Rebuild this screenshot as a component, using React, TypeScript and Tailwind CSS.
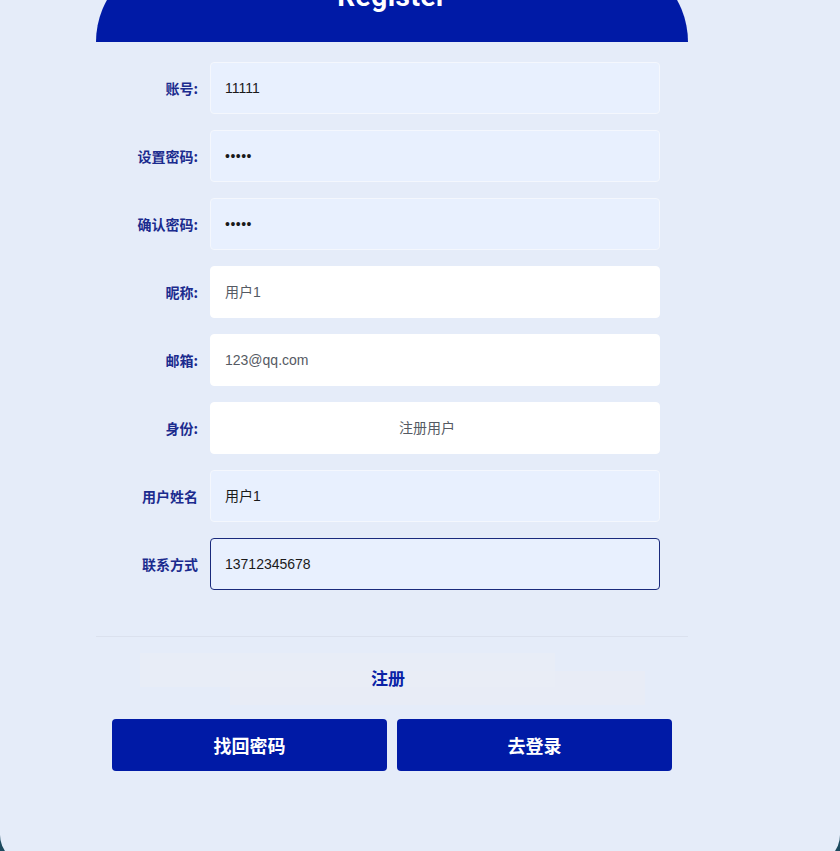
import React from "react";

const rows: { label: string; value: string; kind: "auto" | "white" | "focus"; center?: boolean; pwd?: boolean; gray?: boolean }[] = [
  { label: "账号:", value: "11111", kind: "auto" },
  { label: "设置密码:", value: "•••••", kind: "auto", pwd: true },
  { label: "确认密码:", value: "•••••", kind: "auto", pwd: true },
  { label: "昵称:", value: "用户1", kind: "white", gray: true },
  { label: "邮箱:", value: "123@qq.com", kind: "white", gray: true },
  { label: "身份:", value: "注册用户", kind: "white", gray: true, center: true },
  { label: "用户姓名", value: "用户1", kind: "auto" },
  { label: "联系方式", value: "13712345678", kind: "focus" },
];

export default function App() {
  return (
    <div className="min-h-screen w-full bg-[#1d4a5e] overflow-hidden" style={{ fontFamily: '"Liberation Sans", "Noto Sans CJK SC", sans-serif' }}>
      <div className="w-full h-[863px] rounded-b-[28px] bg-[#e5ecf9] overflow-hidden">
        <div className="ml-[96px] w-[592px] flex flex-col">
          <div className="-mt-[44px] h-[86px] rounded-t-[86px] bg-[#001aa6] flex justify-center">
            <div className="mt-[25px] text-white font-bold text-[28px] leading-[32px] tracking-[0.5px]" style={{ fontFamily: 'Roboto, "Liberation Sans", sans-serif' }}>
              Register
            </div>
          </div>
          <div className="mt-[20px] flex flex-col gap-[16px]">
            {rows.map((r) => (
              <div key={r.label} className="flex items-center h-[52px]">
                <div
                  className="w-[102px] text-right text-[14px] font-bold text-[#1b2b8e]"
                  style={{ fontFamily: '"Noto Sans CJK SC", sans-serif' }}
                >
                  {r.label}
                </div>
                <div
                  className={
                    "ml-[12px] w-[450px] h-[52px] rounded-[4px] flex items-center text-[14px] " +
                    (r.kind === "auto"
                      ? "bg-[#e8f0fe] border border-[#f4f7fd]"
                      : r.kind === "white"
                      ? "bg-white border border-white"
                      : "bg-[#e8f0fe] border border-[#1a2a7c]") +
                    (r.center ? " justify-center pl-[14px] pr-[30px]" : " px-[14px]") +
                    (r.gray ? " text-[#555a63]" : " text-[#1a1a1a]")
                  }
                >
                  <span className={r.pwd ? "text-[14px] tracking-[0.5px]" : ""}>{r.value}</span>
                </div>
              </div>
            ))}
          </div>
          <div className="mt-[46px] h-px bg-[#dbe1ee]" />
          <div className="relative mt-[16px] h-[52px] flex items-center justify-center">
            <div className="absolute left-[44px] top-0 w-[415px] h-[34px] bg-[#e9edf6] opacity-80" />
            <div className="absolute left-[134px] top-[18px] w-[415px] h-[34px] bg-[#e9edf5] opacity-70" />
            <span
              className="relative text-[17px] font-bold text-[#0a22a6] -mt-[2px] -ml-[8px]"
              style={{ fontFamily: '"Noto Sans CJK SC", sans-serif' }}
            >
              注册
            </span>
          </div>
          <div className="mt-[14px] flex gap-[10px] px-[16px]">
            <button
              className="flex-1 h-[52px] rounded-[4px] bg-[#001aa6] text-white text-[18px] font-bold"
              style={{ fontFamily: '"Noto Sans CJK SC", sans-serif' }}
            >
              找回密码
            </button>
            <button
              className="flex-1 h-[52px] rounded-[4px] bg-[#001aa6] text-white text-[18px] font-bold"
              style={{ fontFamily: '"Noto Sans CJK SC", sans-serif' }}
            >
              去登录
            </button>
          </div>
        </div>
      </div>
    </div>
  );
}
